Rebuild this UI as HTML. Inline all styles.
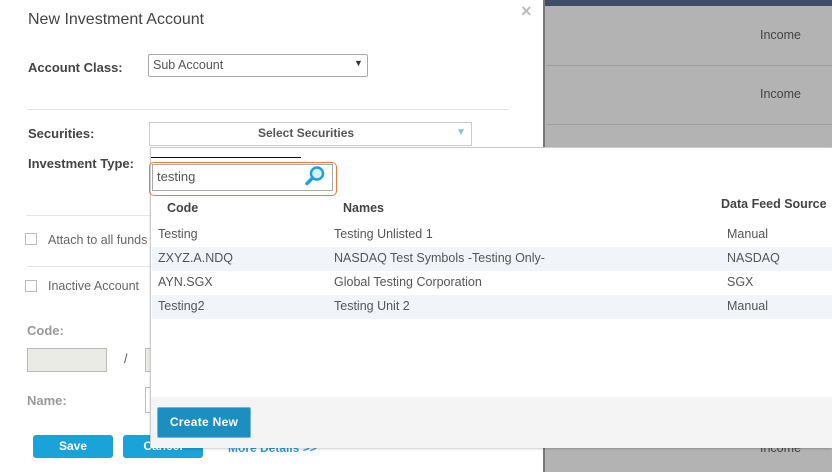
<!DOCTYPE html>
<html><head><style>
body{margin:0;width:832px;height:472px;overflow:hidden;position:relative;font-family:"Liberation Sans",sans-serif;background:#b3b3b3}
div,span{position:absolute;box-sizing:border-box}
.lbl{font-weight:bold;font-size:13px;color:#444}
.gl{color:#999}
.t{font-size:12.5px;color:#555}
.row{left:1px;right:0;height:24px}
</style></head><body>
<div style="left:0;top:0;width:832px;height:6px;background:#3d4f66"></div>
<div style="left:546px;top:65px;width:286px;height:1px;background:#9f9f9f"></div>
<div style="left:546px;top:124px;width:286px;height:1px;background:#9f9f9f"></div>
<span class="t" style="left:760px;top:28px;color:#444">Income</span>
<span class="t" style="left:760px;top:87px;color:#444">Income</span>
<span class="t" style="left:760px;top:441px;color:#444">Income</span>
<div style="left:0;top:0;width:545px;height:472px;background:#fff;border-right:2px solid #777"></div>
<span style="left:28px;top:11px;font-size:16px;color:#444">New Investment Account</span>
<span style="left:521px;top:1px;font-size:18px;color:#bbb;font-weight:bold">×</span>
<span class="lbl" style="left:28px;top:60px">Account Class:</span>
<div style="left:148px;top:54px;width:220px;height:23px;border:1px solid #aaa;border-radius:2px"></div>
<span class="t" style="left:153px;top:58px">Sub Account</span>
<span style="left:354px;top:58px;font-size:9px;color:#333">▼</span>
<div style="left:27px;top:109px;width:482px;height:1px;background:#e5e5e5"></div>
<span class="lbl" style="left:28px;top:126px">Securities:</span>
<div style="left:149px;top:122px;width:323px;height:24px;border:1px solid #ccc"></div>
<span style="left:258px;top:126px;font-size:12px;font-weight:bold;color:#555">Select Securities</span>
<span style="left:456px;top:127px;font-size:10px;color:#7cc4e8">▼</span>
<span class="lbl" style="left:28px;top:156px">Investment Type:</span>
<div style="left:27px;top:215px;width:482px;height:1px;background:#e5e5e5"></div>
<div style="left:25px;top:233px;width:12px;height:12px;border:1px solid #bbb"></div>
<span class="t" style="left:48px;top:233px;color:#666">Attach to all funds</span>
<div style="left:27px;top:266px;width:482px;height:1px;background:#e5e5e5"></div>
<div style="left:25px;top:280px;width:12px;height:12px;border:1px solid #bbb"></div>
<span class="t" style="left:48px;top:279px;color:#666">Inactive Account</span>
<span class="lbl gl" style="left:27px;top:323px">Code:</span>
<div style="left:27px;top:348px;width:80px;height:24px;background:#ebebe6;border:1px solid #bbb"></div>
<span class="t" style="left:124px;top:352px">/</span>
<div style="left:145px;top:348px;width:10px;height:24px;border:1px solid #bbb;background:#ebebe6"></div>
<span class="lbl gl" style="left:27px;top:393px">Name:</span>
<div style="left:145px;top:387px;width:10px;height:26px;border:1px solid #bbb"></div>
<div style="left:33px;top:435px;width:80px;height:23px;background:#19a3d9;border-radius:3px;color:#fff;font-weight:bold;font-size:12px;text-align:center;line-height:23px">Save</div>
<div style="left:123px;top:435px;width:80px;height:23px;background:#19a3d9;border-radius:3px;color:#fff;font-weight:bold;font-size:12px;text-align:center;line-height:23px">Cancel</div>
<span style="left:228px;top:441px;font-size:12px;font-weight:bold;color:#2a9bd5">More Details &gt;&gt;</span>
<!-- dropdown -->
<div style="left:150px;top:147px;width:682px;height:301px;background:#fff;border-top:1px solid #ccc;border-left:1px solid #ccc;border-bottom:1px solid #ccc;box-shadow:0 1px 2px rgba(0,0,0,.2)">
 <div style="left:0;top:9px;width:150px;height:1px;background:#111"></div>
 <div style="left:-2px;top:14px;width:188px;height:34px;border:1px solid #ef7a3a;border-radius:5px"></div>
 <div style="left:1px;top:16px;width:181px;height:27px;border:1px solid #aaa"></div>
 <span style="left:6px;top:21px;font-size:13px;color:#555">testing</span>
 <svg style="position:absolute;left:153px;top:17px" width="22" height="22" viewBox="0 0 22 22"><circle cx="13" cy="8.5" r="6" fill="#d8f0fb" stroke="#1ea0dc" stroke-width="2.5"/><path d="M8.5 13 L3 18.5" stroke="#1ea0dc" stroke-width="3.5" stroke-linecap="round"/></svg>
 <span class="lbl" style="left:16px;top:53px;font-size:12.5px">Code</span>
 <span class="lbl" style="left:192px;top:53px;font-size:12.5px">Names</span>
 <span class="lbl" style="left:570px;top:49px;font-size:12.5px">Data Feed Source</span>
 <div class="row" style="top:75px"><span class="t" style="left:6px;top:4px">Testing</span><span class="t" style="left:182px;top:4px">Testing Unlisted 1</span><span class="t" style="left:575px;top:4px">Manual</span></div>
 <div class="row" style="top:99px;background:#f1f4f9"><span class="t" style="left:6px;top:4px">ZXYZ.A.NDQ</span><span class="t" style="left:182px;top:4px">NASDAQ Test Symbols -Testing Only-</span><span class="t" style="left:575px;top:4px">NASDAQ</span></div>
 <div class="row" style="top:123px"><span class="t" style="left:6px;top:4px">AYN.SGX</span><span class="t" style="left:182px;top:4px">Global Testing Corporation</span><span class="t" style="left:575px;top:4px">SGX</span></div>
 <div class="row" style="top:147px;background:#f1f4f9"><span class="t" style="left:6px;top:4px">Testing2</span><span class="t" style="left:182px;top:4px">Testing Unit 2</span><span class="t" style="left:575px;top:4px">Manual</span></div>
 <div style="left:0;right:0;top:249px;height:51px;background:#f4f4f4"></div>
 <div style="left:6px;top:259px;width:94px;height:31px;background:#1a8fc0;border:1px solid #6cb8e0;border-radius:2px;color:#fff;font-size:12px;font-weight:bold;text-align:center;line-height:29px;letter-spacing:.3px">Create New</div>
</div>
</body></html>
